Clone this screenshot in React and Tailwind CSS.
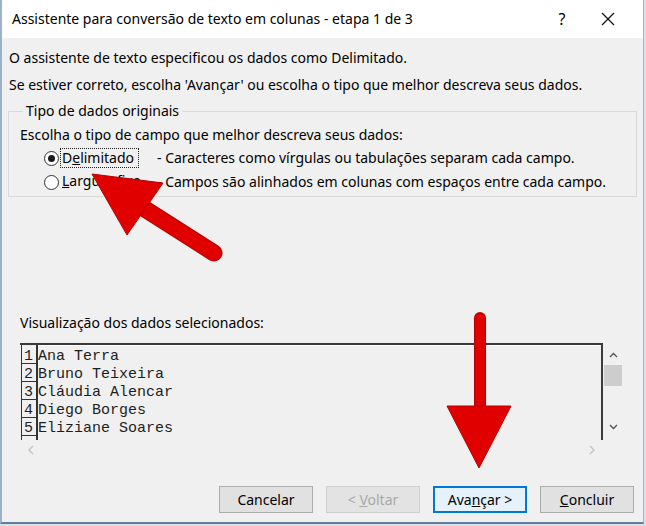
export default function App() {
  const names = ["Ana Terra", "Bruno Teixeira", "Cláudia Alencar", "Diego Borges", "Eliziane Soares", ""];
  const mono = "font-['Liberation_Mono','Courier_New',monospace]";
  return (
    <div className="relative w-[646px] h-[526px] bg-[#d9e1ea] overflow-hidden">
      <div className="flex flex-col w-[644px] h-[524px] bg-[#f0f0f0] border-l-2 border-b-2 border-r border-l-[#9bb3ca] border-b-[#5f7e9c] border-r-[#a9b4bf] text-[14px] text-black font-['Noto_Sans',sans-serif]">
        {/* title bar */}
        <div className="flex items-center h-[38px] bg-white pl-[10px] shrink-0">
          <span className="leading-[20px]">Assistente para conversão de texto em colunas - etapa 1 de 3</span>
          <div className="ml-auto flex items-center mr-[12px]">
            <div className="w-[46px] flex justify-center text-[16px] leading-[20px]">?</div>
            <div className="w-[46px] flex justify-center">
              <svg width="14" height="14" viewBox="0 0 14 14">
                <line x1="1" y1="1" x2="13" y2="13" stroke="#111" strokeWidth="1.2" />
                <line x1="13" y1="1" x2="1" y2="13" stroke="#111" strokeWidth="1.2" />
              </svg>
            </div>
          </div>
        </div>
        {/* body */}
        <div className="flex flex-col px-[6px]">
          <p className="mt-[6px] h-[27px] leading-[27px] pl-[1px]">O assistente de texto especificou os dados como Delimitado.</p>
          <p className="h-[27px] leading-[27px] pl-[1px]">Se estiver correto, escolha 'Avançar' ou escolha o tipo que melhor descreva seus dados.</p>
          <fieldset className="mt-[4px] border border-[#d9d9d9] pl-[11px] pb-[2px]">
            <legend className="ml-[3px] px-[3px] leading-[18px]">Tipo de dados originais</legend>
            <div className="mt-[4px] h-[22px] leading-[22px]">Escolha o tipo de campo que melhor descreva seus dados:</div>
            <div className="flex items-center h-[24px]">
              <div className="ml-[24px] w-[15px] h-[15px] rounded-full border border-[#333] bg-white flex items-center justify-center">
                <div className="w-[7px] h-[7px] rounded-full bg-[#1a1a1a]" />
              </div>
              <div className="w-[98px] pl-[1px] flex">
                <span className="h-[20px] leading-[18px] pl-[1px] pr-[4px] border border-dotted border-[#222]">D<u>e</u>limitado</span>
              </div>
              <span className="leading-[20px]">- Caracteres como vírgulas ou tabulações separam cada campo.</span>
            </div>
            <div className="flex items-center h-[24px]">
              <div className="ml-[24px] w-[15px] h-[15px] rounded-full border border-[#333] bg-white" />
              <div className="w-[98px] pl-[1px] flex">
                <span className="h-[20px] leading-[18px] pl-[2px] pr-[4px]"><u>L</u>argura fixa</span>
              </div>
              <span className="leading-[20px]">- Campos são alinhados em colunas com espaços entre cada campo.</span>
            </div>
          </fieldset>
          <div className="mt-[116px] h-[20px] leading-[20px] pl-[12px]">Visualização dos dados selecionados:</div>
          {/* preview */}
          <div className="mt-[10px] ml-[12px] flex flex-col w-[603px]">
            <div className="flex h-[97px]">
              <div className="w-[583px] h-[97px] border-t-2 border-r-2 border-[#3a3a3a] flex overflow-hidden">
                <div className="ml-[1px] w-[17px] border-l border-r-2 border-[#333] flex flex-col pt-[1px]">
                  {names.map((n, i) => (
                    <div key={i} className={`h-[18px] shrink-0 border-b border-[#333] pl-[2px] leading-[21px] text-[15px] text-[#1e1e1e] overflow-hidden ${mono}`}>
                      {n ? i + 1 : ""}
                    </div>
                  ))}
                </div>
                <div className="flex-1 flex flex-col border-t border-white">
                  {names.map((n, i) => (
                    <div key={i} className={`h-[18px] shrink-0 leading-[21px] text-[15px] text-[#1e1e1e] whitespace-pre ${mono}`}>
                      {n}
                    </div>
                  ))}
                </div>
              </div>
              <div className="w-[20px] flex flex-col items-center">
                <svg className="mt-[9px]" width="9" height="6" viewBox="0 0 9 6">
                  <polyline points="1,5 4.5,1.5 8,5" fill="none" stroke="#555" strokeWidth="1.4" />
                </svg>
                <div className="mt-[7px] w-[18px] h-[21px] bg-[#cdcdcd]" />
                <svg className="mt-[38px]" width="9" height="6" viewBox="0 0 9 6">
                  <polyline points="1,1 4.5,4.5 8,1" fill="none" stroke="#555" strokeWidth="1.4" />
                </svg>
              </div>
            </div>
            <div className="h-[20px] w-[583px] flex items-center justify-between px-[8px]">
              <svg width="6" height="10" viewBox="0 0 6 10">
                <polyline points="5,1 1,5 5,9" fill="none" stroke="#c4c4c4" strokeWidth="1.4" />
              </svg>
              <svg width="6" height="10" viewBox="0 0 6 10">
                <polyline points="1,1 5,5 1,9" fill="none" stroke="#c4c4c4" strokeWidth="1.4" />
              </svg>
            </div>
          </div>
          {/* buttons */}
          <div className="mt-[26px] flex justify-end gap-[13px] pr-[3px]">
            <button className="w-[94px] h-[27px] bg-[#e1e1e1] border border-[#adadad] leading-[25px]">Cancelar</button>
            <button className="w-[94px] h-[27px] bg-[#e3e3e3] border border-[#cfcfcf] text-[#a8a8a8] leading-[25px]">&lt; <u>V</u>oltar</button>
            <button className="w-[94px] h-[27px] bg-[#e5f1fb] border-2 border-[#0078d7] leading-[23px]">Ava<u>n</u>çar &gt;</button>
            <button className="w-[94px] h-[27px] bg-[#e1e1e1] border border-[#adadad] leading-[25px]"><u>C</u>oncluir</button>
          </div>
        </div>
      </div>
      {/* red arrows overlay */}
      <svg className="absolute inset-0 pointer-events-none" width="646" height="526" viewBox="0 0 646 526">
        <line x1="145" y1="209" x2="214" y2="253" stroke="#b80000" strokeWidth="17" strokeLinecap="round" />
        <line x1="145" y1="209" x2="214" y2="253" stroke="#e00000" strokeWidth="15" strokeLinecap="round" />
        <polygon points="92,174 163,183 127,235" fill="#e00000" stroke="#b80000" strokeWidth="1" strokeLinejoin="round" />
        <line x1="480" y1="318" x2="480" y2="410" stroke="#b80000" strokeWidth="12" strokeLinecap="round" />
        <line x1="480" y1="318" x2="480" y2="410" stroke="#e00000" strokeWidth="10" strokeLinecap="round" />
        <polygon points="447,406 511,406 479,468" fill="#e00000" stroke="#b80000" strokeWidth="1" strokeLinejoin="round" />
      </svg>
    </div>
  );
}
